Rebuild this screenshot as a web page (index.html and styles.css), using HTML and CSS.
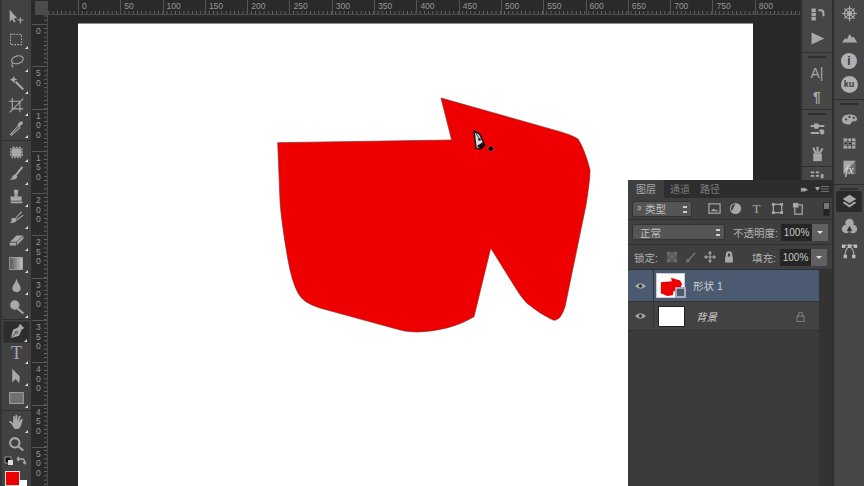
FILE: index.html
```html
<!DOCTYPE html>
<html lang="zh-CN">
<head>
  <meta charset="UTF-8" />
  <title>Photoshop</title>
  <link rel="stylesheet" href="styles.css">
</head>
<body>

<svg class="defs" width="0" height="0">
  <defs>
    <linearGradient id="gradTool"><stop offset="0" stop-color="#555"/><stop offset="1" stop-color="#c4c4c4"/></linearGradient>
  </defs>
</svg>

<aside class="toolbar">
  <div class="tool"><svg viewBox="0 0 20 20"><path class="fill" d="M2 1v14l3-3 2 4 2-1-2-4h4z"/><path class="line" d="M11 13h7M14.500 10v7"/></svg></div>
  <div class="tool more"><svg viewBox="0 0 20 20"><rect class="line dash" x="3" y="4" width="13" height="12"/></svg></div>
  <div class="tool more"><svg viewBox="0 0 20 20"><ellipse class="line" cx="11" cy="8" rx="7" ry="4.500" transform="rotate(-15 11 8)"/><path class="line" d="M5 12q-1 3 1 5"/></svg></div>
  <div class="tool more"><svg viewBox="0 0 20 20"><path class="fill" d="M7 1l1 3 3 1-3 1.500L7 10 5.500 7 2 5.500 5.500 4z"/><path class="line thick" d="M9 8l9 9"/></svg></div>
  <div class="tool more"><svg viewBox="0 0 20 20"><path class="line" d="M5 1v13h13M1 5h13v13M2 18L18 2"/></svg></div>
  <div class="tool more"><svg viewBox="0 0 20 20"><path class="line" d="M3 17l9-10 2 2-10 9z"/><path class="fill" d="M11 6l3-4q2-1 3 0t0 3l-4 3z"/></svg></div>
  <div class="tool-sep"></div>
  <div class="tool more"><svg viewBox="0 0 20 20"><rect class="fill" x="4" y="5" width="12" height="10" rx="2"/><rect class="line dash" x="3" y="4" width="14" height="12" rx="3"/></svg></div>
  <div class="tool more"><svg viewBox="0 0 20 20"><path class="line thick" d="M9 11l8-10"/><path class="fill" d="M8 10q3 1 3 3-2 4-9 3 3-1 3-3t3-3z"/></svg></div>
  <div class="tool more"><svg viewBox="0 0 20 20"><path class="fill" d="M7 2h5v2l-1 6h5v5H3v-5h5L7 4zM3 16h14v2H3z"/></svg></div>
  <div class="tool more"><svg viewBox="0 0 20 20"><path class="line" d="M9 10l7-8M10 12l8-6"/><path class="fill" d="M7 9q3 0 3 3-2 4-8 3 3-1 2-3t3-3z"/></svg></div>
  <div class="tool more"><svg viewBox="0 0 20 20"><path class="fill" d="M2 12l8-8h8v4l-8 8H2z"/><path class="cut" d="M2 12h8v4M10 12l8-8"/></svg></div>
  <div class="tool more"><svg viewBox="0 0 20 20"><rect x="2" y="3" width="15" height="14" fill="url(#gradTool)" stroke="#aaa" stroke-width="1"/></svg></div>
  <div class="tool more"><svg viewBox="0 0 20 20"><path class="fill" d="M10 2q1 4 4 8 3 7-4 8-7-1-4-8 3-4 4-8z"/></svg></div>
  <div class="tool more"><svg viewBox="0 0 20 20"><circle class="fill" cx="8" cy="7" r="5.500"/><path class="line thick" d="M11 11l7 6"/></svg></div>
  <div class="tool-sep"></div>
  <div class="tool more active"><svg viewBox="0 0 20 20"><path class="fill" d="M14 1l5 5-3 2-3 7-10 3 3-10 6-3z"/><path class="cut" d="M3 18l6-6"/><circle class="cut" cx="10" cy="11" r="1.300"/></svg></div>
  <div class="tool more"><span class="type-tool">T</span></div>
  <div class="tool more"><svg viewBox="0 0 20 20"><path class="fill" d="M5 1v16l4-4 4 5 1-7h-1l1-1z"/></svg></div>
  <div class="tool more"><svg viewBox="0 0 20 20"><rect class="fill dim" x="2" y="3" width="16" height="13" stroke="#aaa" stroke-width="1"/></svg></div>
  <div class="tool-sep"></div>
  <div class="tool more"><svg viewBox="0 0 20 20"><path class="fill" d="M1 9l2-1 3 3V3l2-1v6l1-7 2 .5V8l2-6 2 .5-2 7 3-4 1.500 1-2 6q-1 5-5 5H8q-2-2-4-6z"/></svg></div>
  <div class="tool"><svg viewBox="0 0 20 20"><circle class="line thick" cx="8" cy="8" r="5.500"/><path class="line thick" d="M12 12l6 5"/></svg></div>
  <div class="swap">
    <svg viewBox="0 0 10 10"><rect x="1" y="1" width="6" height="6" fill="#111" stroke="#aaa" stroke-width=".8"/><rect x="4" y="4" width="5" height="5" fill="#ddd"/></svg>
    <svg viewBox="0 0 10 10"><path class="line" d="M1 3h5q3 0 3 5M1 3l2-2M1 3l2 2M9 8l-2-2M9 8l1-2"/></svg>
  </div>
  <div class="swatches">
    <div class="swatch-fg"></div>
    <div class="swatch-bg"></div>
  </div>
</aside>

<main class="workspace">
  <div class="ruler-row">
    <div class="ruler-corner"></div>
    <div class="ruler-top">
      <span>0</span><span>50</span><span>100</span><span>150</span><span>200</span><span>250</span><span>300</span><span>350</span><span>400</span>
      <span>450</span><span>500</span><span>550</span><span>600</span><span>650</span><span>700</span><span>750</span><span>800</span>
    </div>
  </div>
  <div class="canvas-row">
    <div class="ruler-left">
      <span>0</span><span>50</span><span>100</span><span>150</span><span>200</span><span>250</span><span>300</span><span>350</span><span>400</span><span>450</span><span>500</span>
    </div>
    <div class="canvas">
      <div class="doc">
        <svg class="shape" viewBox="260 90 340 250">
          <path class="shape-path" d="M277.700 142.700 L451.700 140 L441 98 L560 131.700 Q572 135 578 139 Q585 150 590 170 Q590 180 586 205 L565 306.700 Q560 322 553 320 Q540 314 526.700 303 Q521 297 515 287 L490.700 248 L474 316.700 Q462 324 446.700 328 Q430 332 416.700 332 Q405 332 393 328 L320 308 Q303 303 298 293 Q292 282 288 260 Q281 220 280 200 Z"/>
          <path d="M474 131l5.500 3 5 10.500-4.500 4.500-4-1z" fill="#ddd" stroke="#1a1a1a" stroke-width="1.500"/>
          <path d="M477 146l6-4 2.500 3-4 4.500z" fill="#111"/>
          <path d="M475 132l4.500 7" stroke="#222" stroke-width=".8"/>
          <circle cx="479.500" cy="139.500" r="1.300" fill="#111"/>
          <circle cx="490.700" cy="148.700" r="2.800" fill="#111" stroke="#b33" stroke-width="1"/>
        </svg>
      </div>
    </div>
  </div>
</main>

<div class="dock">
  <div class="dock-group first">
    <div class="dock-item"><svg viewBox="0 0 20 20"><path class="fill" d="M3 3h5v4H3zM3 8h5v4H3zM3 13h5v4H3z"/><path class="line thick" d="M11 5h3q3 0 3 4v3"/></svg></div>
    <div class="dock-item"><svg viewBox="0 0 20 20"><path class="fill" d="M3 3l15 7-15 7z"/></svg></div>
  </div>
  <div class="dock-group mid">
    <div class="dock-item"><span class="dock-text">A|</span></div>
    <div class="dock-item"><span class="dock-text bold">¶</span></div>
  </div>
  <div class="dock-group mid">
    <div class="dock-item"><svg viewBox="0 0 20 20"><path class="line thick" d="M2 6h16M2 14h10"/><path class="fill" d="M6 3h5l1 3-1 3H6zM12 11q5-3 6 1t-4 4z"/></svg></div>
    <div class="dock-item"><svg viewBox="0 0 20 20"><path class="fill" d="M5 10h10v9H5z"/><path class="line thick" d="M8 10L5 3M10 10V2M12 10l4-6"/></svg></div>
    <div class="dock-item"><svg viewBox="0 0 20 20"><path class="fill" d="M2 3h4v2H2zM8 3h4v2H8zM2 7h4v2H2zM8 7h4v2H8zM14 6h3v5h-3z"/></svg></div>
  </div>
</div>

<div class="dock">
  <div class="dock-group tall">
    <div class="dock-item"><svg viewBox="0 0 20 20"><circle class="line" cx="10" cy="10" r="6"/><path class="line" d="M10 1v18M1 10h18M4 4l12 12M16 4L4 16"/><circle class="fill" cx="10" cy="10" r="3"/></svg></div>
    <div class="dock-item"><svg viewBox="0 0 20 20"><path class="fill" d="M1 16l4-5 2 1 3-6 3 4 2-1 4 7z"/></svg></div>
    <div class="dock-item"><div class="round-badge info">i</div></div>
    <div class="dock-item"><div class="round-badge ku">ku</div></div>
  </div>
  <div class="dock-group mid wide">
    <div class="dock-item"><svg viewBox="0 0 20 20"><path class="fill" d="M10 4q8 0 9 5 0 3-4 3-3 0-3 2t-3 2q-8 0-8-6 1-6 9-6z"/><circle class="cut-dot" cx="6" cy="10" r="1.300"/><circle class="cut-dot" cx="10" cy="7" r="1.300"/><circle class="cut-dot" cx="15" cy="8" r="1.300"/></svg></div>
    <div class="dock-item"><svg viewBox="0 0 20 20"><rect class="fill" x="3" y="4" width="14" height="12"/><path class="cut" d="M3 8h14M3 12h14M8 4v12M12.500 4v12"/><path d="M4 9h3v2H4zM9 9h3v2H9z" fill="#222"/></svg></div>
    <div class="dock-item"><svg viewBox="0 0 20 20"><path class="fill dim" d="M3 2h14v16H3z"/><path class="fill" d="M3 2h14L3 18z"/></svg><span class="fx">fx</span></div>
  </div>
  <div class="dock-group last">
    <div class="dock-item selected"><svg viewBox="0 0 20 20"><path class="fill" d="M10 2l8 5-8 5-8-5z"/><path class="fill" d="M4 10l-2 1.500 8 5.500 8-5.500-2-1.500-6 4z"/></svg></div>
    <div class="dock-item"><svg viewBox="0 0 20 20"><circle class="fill" cx="10" cy="6" r="5"/><circle class="fill" cx="6" cy="13" r="5"/><circle class="fill" cx="14" cy="13" r="5"/><path d="M10 9l3 6q-3 2-6 0z" fill="#333"/></svg></div>
    <div class="dock-item"><svg viewBox="0 0 20 20"><path class="line" d="M3 5q7-3 14 0M5 17q-1-8 5-12 6 4 5 12"/><path d="M1 3h4v4H1zM15 3h4v4h-4zM8 3h4v4H8zM3 15h4v4H3zM13 15h4v4h-4z" fill="#bbb"/></svg></div>
  </div>
</div>

<section class="panel">
  <div class="tabs">
    <div class="tab current">图层</div>
    <div class="tab">通道</div>
    <div class="tab">路径</div>
    <div class="tabs-right">
      <span class="collapse">▸▸</span>
      <svg class="panel-menu" viewBox="0 0 14 8"><path class="fill" d="M0 2h5L2.500 6z"/><path class="fill dim" d="M6 1h8v1H6zM6 3.500h8v1H6zM6 6h8v1H6z"/></svg>
    </div>
  </div>

  <div class="row row-filter">
    <div class="select select-filter"><span class="search">⌕</span>类型<span class="updown"></span></div>
    <div class="filter-icons">
      <svg viewBox="0 0 14 14"><rect class="line" x="1" y="2" width="12" height="10"/><path class="fill" d="M3 10l3-3 2 2 1-1 2 2z"/></svg>
      <svg viewBox="0 0 14 14"><circle class="fill" cx="7" cy="7" r="6"/><path d="M7 2a5 5 0 0 0-4 8z" fill="#444"/></svg>
      <span class="filter-t">T</span>
      <svg viewBox="0 0 14 14"><rect class="line" x="2.500" y="2.500" width="9" height="9"/><path class="fill" d="M1 1h3v3H1zM10 1h3v3h-3zM1 10h3v3H1zM10 10h3v3h-3z"/></svg>
      <svg viewBox="0 0 14 14"><path class="line" d="M3 6v7h8V3H7"/><path class="fill" d="M1 1h6v5H1z"/></svg>
    </div>
    <div class="toggle"><div class="toggle-on"></div></div>
  </div>

  <div class="row row-mode">
    <div class="select select-mode">正常<span class="updown"></span></div>
    <label class="field-label opacity-label">不透明度:</label>
    <div class="value">100%</div>
    <div class="value-btn"></div>
  </div>

  <div class="row row-lock">
    <label class="field-label lock-label">锁定:</label>
    <div class="lock-icons">
      <svg viewBox="0 0 14 14"><rect class="fill faint" x="1" y="1" width="12" height="12"/><path d="M1 1h4v4H1zM9 1h4v4H9zM5 5h4v4H5zM1 9h4v4H1zM9 9h4v4H9z" fill="#6a6a6a"/></svg>
      <svg viewBox="0 0 14 14"><path class="line dimline" d="M2 13L12 2"/><path class="fill dim" d="M1 13q0-4 3-4l2 2q-1 3-5 2z"/></svg>
      <svg viewBox="0 0 14 14"><path class="line" d="M7 1v12M1 7h12"/><path class="fill" d="M7 0l2.500 3h-5zM7 14l2.500-3h-5zM0 7l3-2.500v5zM14 7l-3-2.500v5z"/></svg>
      <svg viewBox="0 0 14 14"><path class="line thick" d="M4.500 7V4a2.500 2.500 0 0 1 5 0v3"/><rect class="fill" x="2.500" y="6.500" width="9" height="7"/></svg>
    </div>
    <label class="field-label fill-label">填充:</label>
    <div class="value">100%</div>
    <div class="value-btn"></div>
  </div>

  <div class="layers-wrap">
    <div class="layers">
      <div class="layer layer-current">
        <div class="eye-cell"><svg class="eye" viewBox="0 0 14 10"><path class="fill" d="M0 5q7-7 14 0-7 7-14 0z"/><circle cx="7" cy="5" r="2.200" fill="#333"/></svg></div>
        <div class="thumb thumb-shape">
          <svg viewBox="0 0 29 25"><path d="M4 9l12-1-1-4 10 3 2 4-4 12-5-5-1 5-6 1-7-3z" fill="#ee0000"/></svg>
          <div class="shape-badge"></div>
        </div>
        <div class="layer-name">形状 1</div>
      </div>
      <div class="layer">
        <div class="eye-cell"><svg class="eye" viewBox="0 0 14 10"><path class="fill" d="M0 5q7-7 14 0-7 7-14 0z"/><circle cx="7" cy="5" r="2.200" fill="#333"/></svg></div>
        <div class="thumb"></div>
        <div class="layer-name italic">背景</div>
        <svg class="layer-lock" viewBox="0 0 14 14"><path class="line dimline" d="M4.500 7V4a2.500 2.500 0 0 1 5 0v3"/><rect class="line dimline" x="2.500" y="6.500" width="9" height="7"/></svg>
      </div>
    </div>
    <div class="layers-scroll"></div>
  </div>
</section>

</body>
</html>
```

FILE: styles.css
```css
* {
  margin: 0;
  padding: 0;
  box-sizing: border-box;
}

html, body {
  width: 864px;
  height: 486px;
  overflow: hidden;
}

body {
  position: relative;
  display: flex;
  background-color: #282828;
  font-family: 'Liberation Sans', 'Noto Sans CJK SC', sans-serif;
  color: #b4b4b4;
}

.defs {
  position: absolute;
}

/* shared svg paint */
.fill { fill: #a8a8a8; }
.fill.dim { fill: #707070; }
.fill.faint { fill: #565656; }
.line { fill: none; stroke: #a8a8a8; stroke-width: 1.300; }
.line.thick { stroke-width: 2.400; }
.line.dash { stroke-dasharray: 2 1.500; }
.line.dimline { stroke: #808080; }
.cut { fill: none; stroke: #3f3f3f; stroke-width: 1; }
.cut-dot { fill: #3f3f3f; }

/* left toolbar */
.toolbar {
  flex: 0 0 32px;
  height: 486px;
  padding-top: 6px;
  background-color: #424242;
  border-left: 2px solid #333;
  border-right: 1px solid #2b2b2b;
  overflow: hidden;
}

.tool {
  position: relative;
  display: flex;
  align-items: center;
  justify-content: center;
  height: 22.200px;
}

.tool svg {
  width: 17px;
  height: 17px;
  filter: blur(0.350px);
}

.tool.more::after {
  content: '';
  position: absolute;
  right: 3px;
  bottom: 1px;
  border-left: 3px solid transparent;
  border-bottom: 3px solid #ddd;
}

.tool.active {
  background-color: #2d2d2d;
  box-shadow: inset 0 0 0 1px #363636;
  margin: 0 1px;
}

.tool-sep {
  height: 1px;
  margin: 0.500px 0;
  background-color: #2e2e2e;
}

.type-tool {
  font-family: 'Liberation Serif', serif;
  font-size: 18px;
  color: #a8a8a8;
}

.swap {
  display: flex;
  justify-content: space-between;
  padding: 0 5px 0 2px;
  height: 11px;
}

.swap svg {
  width: 10px;
  height: 10px;
}

.swatches {
  position: relative;
  height: 20px;
  margin-top: 4px;
}

.swatch-fg {
  width: 15px;
  height: 15px;
  margin-left: 3px;
  background-color: #ee0000;
  border: 1px solid #ddd;
}

.swatch-bg {
  position: absolute;
  left: 17px;
  top: 9px;
  width: 8px;
  height: 10px;
  background-color: #fff;
}

/* rulers and canvas */
.workspace {
  flex: 0 0 768px;
  display: flex;
  flex-direction: column;
  height: 486px;
}

.ruler-row {
  display: flex;
  height: 15px;
  background-color: #2a2a2a;
}

.ruler-corner {
  flex: 0 0 13px;
  margin: 1px 0 0 3px;
  background-color: #4b4b4b;
}

.ruler-top {
  flex: 1;
  display: flex;
  padding-left: 30px;
  border-bottom: 1px solid #4a4a4a;
  overflow: hidden;
  background-image: linear-gradient(90deg, #6b6b6b 1px, transparent 1px);
  background-size: 4.230px 3px;
  background-position: 30px bottom;
  background-repeat: repeat-x;
}

.ruler-top span {
  flex: 0 0 42.300px;
  padding: 1px 0 0 3px;
  font-size: 8.500px;
  line-height: 10px;
  color: #969696;
  border-left: 1px solid #555;
}

.canvas-row {
  flex: 1;
  display: flex;
  min-height: 0;
}

.ruler-left {
  flex: 0 0 16px;
  display: flex;
  flex-direction: column;
  padding-top: 9px;
  background-color: #2a2a2a;
  border-right: 1px solid #4a4a4a;
  overflow: hidden;
  background-image: linear-gradient(#6b6b6b 1px, transparent 1px);
  background-size: 3px 4.230px;
  background-position: right 9px;
  background-repeat: repeat-y;
}

.ruler-left span {
  flex: 0 0 42.300px;
  width: 15px;
  padding: 2px 5px 0 4px;
  font-size: 8.500px;
  line-height: 9.500px;
  color: #969696;
  word-break: break-all;
  border-top: 1px solid #555;
}

.canvas {
  flex: 1;
  padding: 9px 0 0 30px;
  background-color: #282828;
  overflow: hidden;
}

.doc {
  position: relative;
  width: 675px;
  height: 100%;
  background-color: #fff;
  box-shadow: 0 -1px 0 #8c8c8c;
}

.shape {
  position: absolute;
  left: 182px;
  top: 66px;
  width: 340px;
  height: 250px;
}

.shape-path {
  fill: #ee0000;
  stroke: #8e2a2a;
  stroke-width: 0.700;
}

/* right docks */
.dock {
  flex: 0 0 32px;
  height: 486px;
  background-color: #464646;
  border-left: 2px solid #2e2e2e;
}

.dock-group {
  border-bottom: 1px solid #2f2f2f;
}

.dock-group.first {
  height: 53px;
  padding-top: 3px;
}

.dock-group.mid {
  position: relative;
  padding-top: 8px;
  height: 57px;
}

.dock-group.mid.wide {
  height: 85px;
}

.dock-group.tall {
  height: 100px;
  padding-top: 2px;
}

.dock-group.last {
  position: relative;
  padding-top: 6px;
  border-bottom: none;
}

.dock-group.mid::before,
.dock-group.last::before {
  content: '';
  position: absolute;
  left: 6px;
  right: 6px;
  top: 3px;
  height: 2px;
  background-color: #303030;
}

.dock-item {
  position: relative;
  display: flex;
  align-items: center;
  justify-content: center;
  height: 23.700px;
}

.dock-item svg {
  width: 17px;
  height: 17px;
  filter: blur(0.350px);
}

.dock-item.selected {
  height: 21px;
  margin: 0 2px 3px;
  background-color: #2a2a2a;
  border-radius: 2px;
}

.dock-text {
  font-size: 14px;
  color: #a8a8a8;
}

.dock-text.bold {
  font-weight: bold;
}

.round-badge {
  display: flex;
  align-items: center;
  justify-content: center;
  width: 16px;
  height: 16px;
  border-radius: 50%;
  background-color: #b0b0b0;
  color: #3a3a3a;
  font-weight: bold;
  font-size: 12px;
  line-height: 1;
}

.round-badge.ku {
  font-size: 9px;
  width: 17px;
  height: 17px;
}

.fx {
  position: absolute;
  left: 11px;
  top: 8px;
  font-family: 'Liberation Serif', serif;
  font-style: italic;
  font-size: 12px;
  color: #ddd;
}

/* layers panel, floats over the canvas */
.panel {
  position: absolute;
  left: 628px;
  top: 180px;
  width: 204px;
  height: 306px;
  display: flex;
  flex-direction: column;
  background-color: #3f3f3f;
  font-size: 10.500px;
}

.tabs {
  display: flex;
  align-items: stretch;
  height: 18px;
  background-color: #2d2d2d;
}

.tab {
  width: 30px;
  padding-top: 3px;
  text-align: center;
  color: #7d7d7d;
  line-height: 13px;
  font-size: 10px;
}

.tab.current {
  width: 36px;
  background-color: #3f3f3f;
  color: #a8a8a8;
  margin-right: 1px;
}

.tabs-right {
  margin-left: auto;
  display: flex;
  align-items: center;
  gap: 9px;
  padding-right: 3px;
}

.collapse {
  font-family: 'DejaVu Sans', sans-serif;
  font-size: 9px;
  letter-spacing: -2px;
  color: #aaa;
}

.panel-menu {
  width: 14px;
  height: 8px;
}

.row {
  display: flex;
  align-items: center;
  padding-left: 4px;
  border-bottom: 1px solid #2f2f2f;
}

.row-filter {
  height: 22px;
}

.row-mode,
.row-lock {
  height: 25px;
}

.select {
  position: relative;
  display: flex;
  align-items: center;
  height: 16px;
  background-color: #555;
  border: 1px solid #333;
  border-radius: 2px;
  color: #c0c0c0;
  font-size: 10.500px;
}

.select-filter {
  width: 60px;
  padding-left: 4px;
}

.select-mode {
  width: 93px;
  padding-left: 7px;
}

.search {
  margin-right: 3px;
  font-family: 'DejaVu Sans', sans-serif;
  font-size: 9px;
}

.updown {
  position: absolute;
  right: 4px;
  top: 4px;
  width: 4px;
  height: 7px;
  border-top: 2px solid #ccc;
  border-bottom: 2px solid #ccc;
}

.filter-icons {
  display: flex;
  align-items: center;
  gap: 8px;
  margin-left: 16px;
}

.filter-icons svg {
  width: 13px;
  height: 13px;
}

.filter-t {
  width: 13px;
  text-align: center;
  font-family: 'Liberation Serif', serif;
  font-size: 13px;
  line-height: 13px;
  color: #a8a8a8;
}

.toggle {
  width: 7px;
  height: 14px;
  margin-left: 18px;
  background-color: #222;
  border: 1px solid #2c2c2c;
}

.toggle-on {
  height: 6px;
  background-color: #777;
}

.field-label {
  color: #b4b4b4;
  font-size: 10.500px;
  white-space: nowrap;
}

.opacity-label {
  margin-left: 8px;
  width: 48px;
}

.lock-label {
  margin-left: 2px;
  width: 30px;
}

.fill-label {
  margin-left: 17px;
  width: 28px;
}

.value {
  width: 31px;
  height: 17px;
  background-color: #252525;
  color: #c8c8c8;
  font-size: 10px;
  line-height: 17px;
  text-align: center;
}

.value-btn {
  position: relative;
  width: 16px;
  height: 17px;
  background-color: #606060;
}

.value-btn::after {
  content: '';
  position: absolute;
  left: 5px;
  top: 7px;
  border-left: 3px solid transparent;
  border-right: 3px solid transparent;
  border-top: 3px solid #ddd;
}

.lock-icons {
  display: flex;
  align-items: center;
  gap: 7px;
  margin-left: 2px;
}

.lock-icons svg {
  width: 12px;
  height: 12px;
}

.layers-wrap {
  flex: 1;
  display: flex;
  min-height: 0;
}

.layers {
  flex: 0 0 191px;
  background-color: #3b3b3b;
}

.layers-scroll {
  flex: 1;
  background-color: #333;
}

.layer {
  display: flex;
  align-items: center;
  height: 29px;
  background-color: #424242;
  border-bottom: 1px solid #333;
  padding-right: 13px;
}

.layer-current {
  height: 32px;
  background-color: #4b5a70;
}

.eye-cell {
  display: flex;
  align-items: center;
  justify-content: center;
  flex: 0 0 26px;
  height: 100%;
  border-right: 1px solid #333;
}

.eye {
  width: 11px;
  height: 8px;
}

.thumb {
  position: relative;
  flex: 0 0 27px;
  height: 21px;
  margin-left: 4px;
  background-color: #fff;
  border: 1px solid #222;
}

.thumb-shape {
  flex-basis: 29px;
  height: 25px;
  margin-left: 2px;
  border: 1px solid #ccd;
}

.thumb-shape svg {
  display: block;
  width: 100%;
  height: 100%;
}

.shape-badge {
  position: absolute;
  right: -2px;
  bottom: -1px;
  width: 11px;
  height: 11px;
  background-color: #4b5a70;
  border: 2px solid #aab;
}

.layer-name {
  margin-left: 8px;
  color: #d0d0d0;
  font-size: 10.500px;
}

.layer-name.italic {
  margin-left: 11px;
  font-style: italic;
}

.layer-lock {
  width: 11px;
  height: 11px;
  margin-left: auto;
}
```
